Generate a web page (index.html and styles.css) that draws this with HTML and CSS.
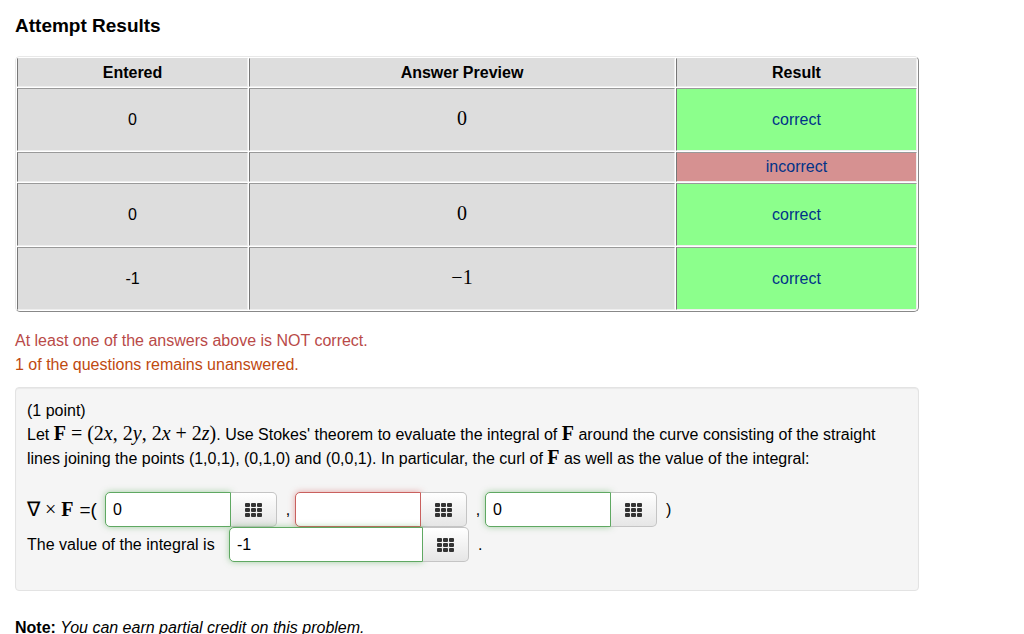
FILE: index.html
```html
<!DOCTYPE html>
<html lang="en">
<head>
    <meta charset="UTF-8">
    <meta name="viewport" content="width=device-width, initial-scale=1.0">
    <title>Attempt Results</title>
    <link rel="stylesheet" href="styles.css">
</head>
<body>
    <svg class="sprite" aria-hidden="true">
        <symbol id="keypad" viewBox="0 0 17 14">
            <rect x="0" y="0" width="5" height="4" rx="1"/>
            <rect x="6" y="0" width="5" height="4" rx="1"/>
            <rect x="12" y="0" width="5" height="4" rx="1"/>
            <rect x="0" y="5" width="5" height="4" rx="1"/>
            <rect x="6" y="5" width="5" height="4" rx="1"/>
            <rect x="12" y="5" width="5" height="4" rx="1"/>
            <rect x="0" y="10" width="5" height="4" rx="1"/>
            <rect x="6" y="10" width="5" height="4" rx="1"/>
            <rect x="12" y="10" width="5" height="4" rx="1"/>
        </symbol>
    </svg>

    <h3>Attempt Results</h3>
    <table class="results">
        <thead>
            <tr>
                <th class="entered">Entered</th>
                <th>Answer Preview</th>
                <th class="result">Result</th>
            </tr>
        </thead>
        <tbody>
            <tr class="answered">
                <td>0</td>
                <td><span class="math">0</span></td>
                <td class="correct"><a href="#ans1">correct</a></td>
            </tr>
            <tr>
                <td></td>
                <td></td>
                <td class="incorrect"><a href="#ans2">incorrect</a></td>
            </tr>
            <tr class="answered">
                <td>0</td>
                <td><span class="math">0</span></td>
                <td class="correct"><a href="#ans3">correct</a></td>
            </tr>
            <tr class="answered">
                <td>-1</td>
                <td><span class="math">−1</span></td>
                <td class="correct"><a href="#ans4">correct</a></td>
            </tr>
        </tbody>
    </table>

    <div class="messages">
        <div class="wrong">At least one of the answers above is NOT correct.</div>
        <div class="unanswered">1 of the questions remains unanswered.</div>
    </div>

    <form class="problem">
        <div>(1 point)</div>
        <p>Let <span class="math"><b>F</b> = (2<i>x</i>, 2<i>y</i>, 2<i>x</i> + 2<i>z</i>)</span>. Use Stokes' theorem to evaluate the integral of <b class="math">F</b> around the curve consisting of the straight lines joining the points (1,0,1), (0,1,0) and (0,0,1). In particular, the curl of <b class="math">F</b> as well as the value of the integral:</p>
        <div class="answer-row">
            <span class="curl"><span class="math">∇ × <b>F</b></span> <span class="open">=(</span></span>
            <span class="answer">
                <input type="text" id="ans1" class="good" value="0" aria-label="answer 1">
                <button type="button" aria-label="equation editor"><svg><use href="#keypad"/></svg></button>
            </span>
            <span class="comma">,</span>
            <span class="answer">
                <input type="text" id="ans2" class="bad" value="" aria-label="answer 2">
                <button type="button" aria-label="equation editor"><svg><use href="#keypad"/></svg></button>
            </span>
            <span class="comma">,</span>
            <span class="answer">
                <input type="text" id="ans3" class="good" value="0" aria-label="answer 3">
                <button type="button" aria-label="equation editor"><svg><use href="#keypad"/></svg></button>
            </span>
            <span class="after">)</span>
        </div>
        <div class="answer-row">
            <label for="ans4">The value of the integral is</label>
            <span class="answer">
                <input type="text" id="ans4" class="good wide" value="-1">
                <button type="button" aria-label="equation editor"><svg><use href="#keypad"/></svg></button>
            </span>
            <span class="after">.</span>
        </div>
    </form>

    <div class="note"><b>Note:</b> <i>You can earn partial credit on this problem.</i></div>
</body>
</html>
```
FILE: styles.css
```css
body {
    font-family: "Liberation Sans", Arial, sans-serif;
    font-size: 16px;
    line-height: 24px;
    color: #000;
    background-color: #fff;
    margin: 0;
    padding: 14px 105px 0 15px;
}
.sprite {
    display: none;
}
h3 {
    font-size: 19px;
    line-height: 24px;
    margin: 0 0 18px;
}
.results {
    width: 100%;
    table-layout: fixed;
    border-collapse: separate;
    border-spacing: 1px;
    border: 1px solid;
    border-color: #e8e8e8 #888 #888 #e8e8e8;
    border-radius: 5px;
    text-align: center;
}
.results th,
.results td {
    box-sizing: border-box;
    height: 30px;
    padding: 1px;
    background-color: #ddd;
    border: 1px solid;
    border-color: #999 #eee #eee #777;
}
.results th {
    height: 29px;
    border-top-color: #ddd;
}
.results .answered td {
    height: 63px;
}
.results .entered {
    width: 231px;
}
.results .result {
    width: 241px;
}
.results .correct {
    background-color: #8cff8c;
}
.results .incorrect {
    background-color: #d69191;
}
.results a {
    color: #038;
    text-decoration: none;
}
.math {
    font-family: "Liberation Serif", "Times New Roman", serif;
    font-size: 20px;
    line-height: 20px;
}
.messages {
    margin: 17px 0 10px;
}
.wrong {
    color: #b94a48;
}
.unanswered {
    color: #c04a10;
}
.problem {
    background-color: #f5f5f5;
    border: 1px solid #e3e3e3;
    border-radius: 4px;
    box-shadow: inset 0 1px 1px rgba(0, 0, 0, 0.05);
    padding: 11px 11px 28px;
}
.problem p {
    margin: 0 0 21px;
}
.answer-row {
    display: flex;
    align-items: center;
}
.answer {
    display: flex;
}
.curl {
    display: flex;
    align-items: baseline;
    gap: 6px;
    width: 78px;
    white-space: nowrap;
}
.open {
    font-size: 19px;
}
.answer-row label {
    width: 202px;
}
.comma {
    width: 18px;
    padding-left: 4px;
    box-sizing: border-box;
    text-align: center;
}
.after {
    margin-left: 9px;
}
.answer input {
    box-sizing: border-box;
    width: 126px;
    height: 35px;
    padding: 4px 7px;
    font: inherit;
    background-color: #fff;
    border: 1px solid;
    border-radius: 5px 0 0 5px;
}
.answer .wide {
    width: 194px;
}
.answer .good {
    border-color: #5fa862;
    box-shadow: 0 0 6px rgba(80, 170, 80, 0.5);
}
.answer .bad {
    border-color: #c9605e;
    box-shadow: 0 0 6px rgba(210, 80, 80, 0.5);
}
.answer button {
    display: flex;
    align-items: center;
    justify-content: center;
    box-sizing: border-box;
    width: 46px;
    height: 35px;
    padding: 0;
    background-image: linear-gradient(#fff, #e6e6e6);
    border: 1px solid #c4c4c4;
    border-left: none;
    border-radius: 0 5px 5px 0;
    cursor: pointer;
}
.answer button svg {
    width: 17px;
    height: 14px;
    fill: #333;
}
.note {
    margin-top: 25px;
}
```
